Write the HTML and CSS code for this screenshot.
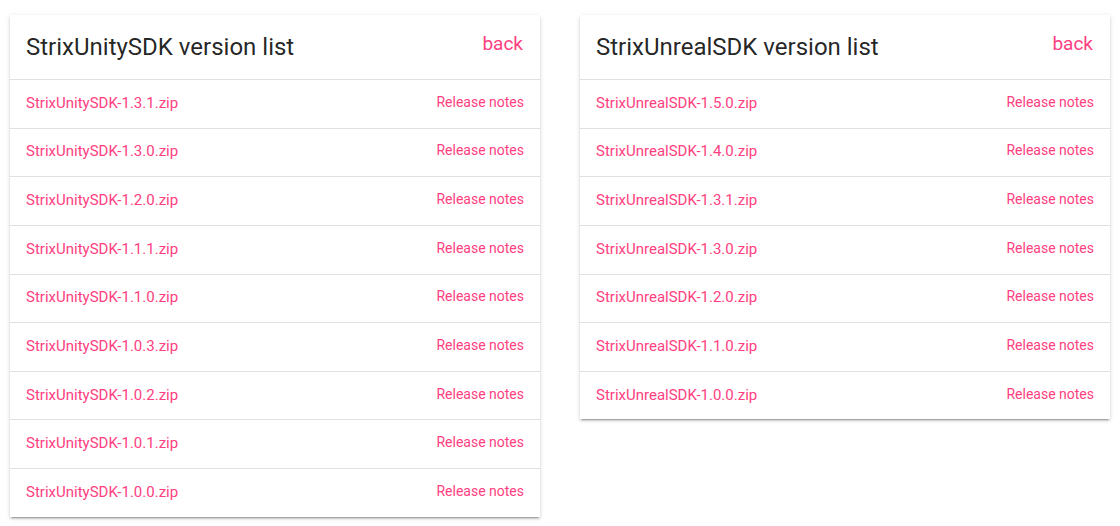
FILE: index.html
```html
<!DOCTYPE html>
<html lang="en">
<head>
    <meta charset="UTF-8">
    <meta name="viewport" content="width=device-width, initial-scale=1.0">
    <title>SDK versions</title>
    <link rel="stylesheet" href="styles.css">
</head>
<body>
    <main class="lists">
        <div class="card">
            <div class="card-head">
                <h2>StrixUnitySDK version list</h2>
                <a class="back" href="#">back</a>
            </div>
            <div class="row"><a href="#">StrixUnitySDK-1.3.1.zip</a><a class="notes" href="#">Release notes</a></div>
            <div class="row"><a href="#">StrixUnitySDK-1.3.0.zip</a><a class="notes" href="#">Release notes</a></div>
            <div class="row"><a href="#">StrixUnitySDK-1.2.0.zip</a><a class="notes" href="#">Release notes</a></div>
            <div class="row"><a href="#">StrixUnitySDK-1.1.1.zip</a><a class="notes" href="#">Release notes</a></div>
            <div class="row"><a href="#">StrixUnitySDK-1.1.0.zip</a><a class="notes" href="#">Release notes</a></div>
            <div class="row"><a href="#">StrixUnitySDK-1.0.3.zip</a><a class="notes" href="#">Release notes</a></div>
            <div class="row"><a href="#">StrixUnitySDK-1.0.2.zip</a><a class="notes" href="#">Release notes</a></div>
            <div class="row"><a href="#">StrixUnitySDK-1.0.1.zip</a><a class="notes" href="#">Release notes</a></div>
            <div class="row"><a href="#">StrixUnitySDK-1.0.0.zip</a><a class="notes" href="#">Release notes</a></div>
        </div>
        <div class="card">
            <div class="card-head">
                <h2>StrixUnrealSDK version list</h2>
                <a class="back" href="#">back</a>
            </div>
            <div class="row"><a href="#">StrixUnrealSDK-1.5.0.zip</a><a class="notes" href="#">Release notes</a></div>
            <div class="row"><a href="#">StrixUnrealSDK-1.4.0.zip</a><a class="notes" href="#">Release notes</a></div>
            <div class="row"><a href="#">StrixUnrealSDK-1.3.1.zip</a><a class="notes" href="#">Release notes</a></div>
            <div class="row"><a href="#">StrixUnrealSDK-1.3.0.zip</a><a class="notes" href="#">Release notes</a></div>
            <div class="row"><a href="#">StrixUnrealSDK-1.2.0.zip</a><a class="notes" href="#">Release notes</a></div>
            <div class="row"><a href="#">StrixUnrealSDK-1.1.0.zip</a><a class="notes" href="#">Release notes</a></div>
            <div class="row"><a href="#">StrixUnrealSDK-1.0.0.zip</a><a class="notes" href="#">Release notes</a></div>
        </div>
    </main>
</body>
</html>
```

FILE: styles.css
```css
body {
    font-family: Roboto, "Liberation Sans", sans-serif;
    margin: 0;
    padding: 15px 10px;
    background: #fff;
}
a {
    color: #ff4081;
    text-decoration: none;
}
.lists {
    display: grid;
    grid-template-columns: 1fr 1fr;
    gap: 40px;
    align-items: start;
}
.card {
    background: #fff;
    box-shadow: 0 2px 2px rgba(0, 0, 0, 0.14), 0 3px 1px -2px rgba(0, 0, 0, 0.2), 0 1px 5px rgba(0, 0, 0, 0.12);
}
.card-head {
    display: flex;
    justify-content: space-between;
    align-items: flex-start;
    height: 64px;
    box-sizing: border-box;
    padding: 16px 16px 0;
}
.card-head h2 {
    margin: 0;
    font-size: 24px;
    font-weight: 400;
    line-height: 32px;
    color: rgba(0, 0, 0, 0.87);
}
.back {
    font-size: 19px;
    line-height: 24px;
    margin-top: 1px;
    margin-right: 1px;
}
.row {
    display: flex;
    justify-content: space-between;
    align-items: center;
    height: 48.625px;
    box-sizing: border-box;
    padding: 0 16px;
    border-top: 1px solid #e0e0e0;
    font-size: 15px;
}
.row a {
    margin-top: -2px;
}
.row .notes {
    font-size: 14px;
    margin-top: -4px;
}
```
